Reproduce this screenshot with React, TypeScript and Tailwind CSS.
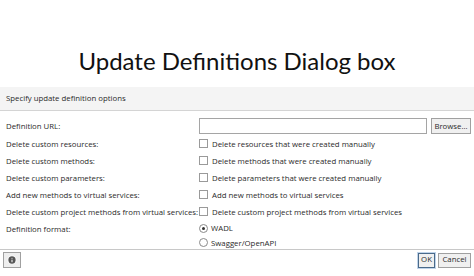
import { Info } from "lucide-react";

const rows: { label: string; text: string }[] = [
  { label: "Delete custom resources:", text: "Delete resources that were created manually" },
  { label: "Delete custom methods:", text: "Delete methods that were created manually" },
  { label: "Delete custom parameters:", text: "Delete parameters that were created manually" },
  { label: "Add new methods to virtual services:", text: "Add new methods to virtual services" },
  {
    label: "Delete custom project methods from virtual services:",
    text: "Delete custom project methods from virtual services",
  },
];

function Box() {
  return <span className="h-[9px] w-[9px] shrink-0 border border-[#9a9a9a] bg-white" />;
}

function Radio({ checked }: { checked?: boolean }) {
  return (
    <span className="flex h-[9px] w-[9px] shrink-0 items-center justify-center rounded-full border border-[#8a8a8a] bg-white">
      {checked && <span className="h-[3px] w-[3px] rounded-full bg-[#333]" />}
    </span>
  );
}

export default function App() {
  return (
    <div className="h-[276px] w-[474px] overflow-hidden bg-white text-[#2a2a2a]">
      <h1 className="pt-[46px] text-center font-['Lato',sans-serif] text-[24px] leading-[30px] text-[#111]">
        Update Definitions Dialog box
      </h1>

      <div className="mt-[11px] flex h-[24px] items-center border-b border-[#d4d4d4] bg-[#f4f4f4] px-[6px] font-['Open_Sans',sans-serif] text-[7.8px]">
        Specify update definition options
      </div>

      <div className="grid grid-cols-[193px_1fr] px-[6px] pt-[5px] font-['Open_Sans',sans-serif] text-[7.8px] leading-[10px]">
        <div className="flex h-[19px] items-center">Definition URL:</div>
        <div className="flex h-[19px] items-center gap-[4px]">
          <span className="h-[16px] w-[228px] border border-[#a5a5a5] bg-white" />
          <button className="h-[16px] w-[40px] border border-[#a0a0a0] bg-[#f0f0f0] text-[7.8px]">
            Browse...
          </button>
        </div>

        {rows.map((r) => (
          <div key={r.label} className="contents">
            <div className="flex h-[17px] items-center whitespace-nowrap">{r.label}</div>
            <div className="flex h-[17px] items-center gap-[4px] whitespace-nowrap">
              <Box />
              {r.text}
            </div>
          </div>
        ))}

        <div className="flex h-[17px] items-center">Definition format:</div>
        <div className="flex flex-col">
          <div className="flex h-[16px] items-center gap-[3px]">
            <Radio checked />
            WADL
          </div>
          <div className="flex h-[13px] items-center gap-[3px]">
            <Radio />
            Swagger/OpenAPI
          </div>
        </div>
      </div>

      <div className="flex items-center justify-between border-t border-[#c8c8c8] px-[3px] pt-[2px] font-['Open_Sans',sans-serif] text-[7.8px]">
        <button className="flex h-[16px] w-[18px] items-center justify-center border border-[#a0a0a0] bg-[#eeeeee]">
          <Info size={10} fill="#555" color="#fff" strokeWidth={2.5} />
        </button>
        <div className="flex gap-[3px]">
          <button className="h-[15px] w-[17px] border border-[#4a6a8a] bg-[#f0f0f0] outline outline-1 outline-[#c0d4ea]">
            OK
          </button>
          <button className="h-[15px] w-[33px] border border-[#a0a0a0] bg-[#f0f0f0]">Cancel</button>
        </div>
      </div>
    </div>
  );
}
